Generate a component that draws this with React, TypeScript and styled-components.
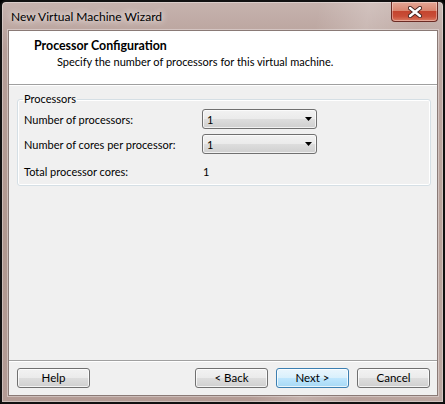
import React from "react";
import styled, { createGlobalStyle } from "styled-components";

const FONT = `"Segoe UI", Lato, "Noto Sans", sans-serif`;

const Global = createGlobalStyle`
  html, body { margin: 0; padding: 0; background: #000; }
  body { font-family: ${FONT}; font-size: 11px; color: #000; }
  * { box-sizing: border-box; }
`;

const Window = styled.div`
  width: 445px;
  height: 404px;
  border: 2px solid #111;
  border-radius: 6px 6px 2px 2px;
  background:
    linear-gradient(100deg, rgba(255,255,255,0) 0%, rgba(255,255,255,0) 62%, rgba(255,255,255,0.2) 72%, rgba(255,255,255,0.06) 82%, rgba(255,255,255,0.12) 100%),
    linear-gradient(180deg, #c6b3ae 0%, #b69e98 12%, #b1988f 60%, #b39b95 100%);
  box-shadow: inset 0 0 0 1px rgba(255,255,255,0.35);
  display: flex;
  flex-direction: column;
  overflow: hidden;
`;

const TitleBar = styled.div`
  height: 28px;
  display: flex;
  align-items: flex-start;
  justify-content: space-between;
  flex-shrink: 0;
`;

const Title = styled.div`
  align-self: center;
  padding-left: 9px;
  font-size: 12px;
  color: #000;
  text-shadow: 0 0 6px rgba(255,255,255,0.9), 0 0 10px rgba(255,255,255,0.6);
`;

const CloseButton = styled.div`
  width: 47px;
  height: 20px;
  margin-right: 5px;
  border: 1px solid #6b2b24;
  border-top: none;
  border-radius: 0 0 4px 4px;
  background: linear-gradient(180deg, #e4a796 0%, #d98670 45%, #c4452f 50%, #c94d37 75%, #db7b62 100%);
  box-shadow: inset 0 0 0 1px rgba(255,255,255,0.35);
  display: flex;
  align-items: center;
  justify-content: center;
`;

const Client = styled.div`
  flex: 1;
  margin: 0 5px 6px 6px;
  border: 1px solid #8a7a76;
  box-shadow: 0 0 0 1px rgba(255,255,255,0.35);
  background: #f0f0f0;
  display: flex;
  flex-direction: column;
`;

const Header = styled.div`
  height: 54px;
  flex-shrink: 0;
  background: #fff;
  border-bottom: 1px solid #a0a0a0;
  padding: 7px 0 0 25px;
`;

const HeaderTitle = styled.div`
  font-weight: bold;
  font-size: 12.4px;
  line-height: 16px;
`;

const HeaderSubtitle = styled.div`
  padding-left: 23px;
  line-height: 16px;
`;

const Body = styled.div`
  flex: 1;
  border-top: 1px solid #fff;
  padding: 6px 6px 0 8px;
`;

const Group = styled.fieldset`
  margin: 0;
  height: 94px;
  border: 1px solid #d5dfe5;
  border-radius: 3px;
  box-shadow: inset 0 0 0 1px #fff;
  padding: 3px 0 0 6px;
  display: grid;
  grid-template-columns: 178px 115px;
  grid-template-rows: 20px 20px 24px;
  row-gap: 5px;
  align-items: center;
  align-content: start;
`;

const Legend = styled.legend`
  padding: 0 1px;
  margin-left: -1px;
  line-height: 14px;
`;

const Label = styled.div``;

const Combo = styled.div`
  height: 20px;
  border: 1px solid #707070;
  border-radius: 3px;
  background: linear-gradient(180deg, #f2f2f2 0%, #ebebeb 48%, #dddddd 52%, #cfcfcf 100%);
  box-shadow: inset 0 0 0 1px rgba(255,255,255,0.7);
  display: flex;
  align-items: center;
  justify-content: space-between;
  padding: 0 4px 0 4px;
`;

const Value = styled.div<{ $indent?: number }>`
  padding-left: ${(p) => p.$indent ?? 0}px;
`;

const Footer = styled.div`
  height: 35px;
  flex-shrink: 0;
  border-top: 1px solid #a0a0a0;
  box-shadow: inset 0 1px 0 #fff;
  display: flex;
  align-items: center;
  padding: 0 7px 0 8px;
  gap: 8px;
`;

const Spacer = styled.div`
  flex: 1;
`;

const Button = styled.div<{ $default?: boolean }>`
  width: 73px;
  height: 20px;
  border: 1px solid ${(p) => (p.$default ? "#3c7fb1" : "#707070")};
  border-radius: 3px;
  background: ${(p) =>
    p.$default
      ? "linear-gradient(180deg, #eaf6fd 0%, #d9f0fc 48%, #bee6fd 52%, #a7d9f5 100%)"
      : "linear-gradient(180deg, #f2f2f2 0%, #ebebeb 48%, #dddddd 52%, #cfcfcf 100%)"};
  box-shadow: inset 0 0 0 1px rgba(255,255,255,0.75);
  display: flex;
  align-items: center;
  justify-content: center;
  font-size: 11.5px;
  line-height: 1;
`;

const Arrow = () => (
  <svg width="7" height="4" viewBox="0 0 7 4">
    <path d="M0 0 H7 L3.5 4 Z" fill="#000" />
  </svg>
);

const CloseX = () => (
  <svg width="14" height="12" viewBox="0 0 14 12">
    <path
      d="M2 2 L12 10 M12 2 L2 10"
      stroke="#4a2622"
      strokeWidth="4.2"
      strokeLinecap="round"
    />
    <path
      d="M2 2 L12 10 M12 2 L2 10"
      stroke="#fff"
      strokeWidth="2.4"
      strokeLinecap="round"
    />
  </svg>
);

export default function App() {
  return (
    <>
      <Global />
      <Window>
        <TitleBar>
          <Title>New Virtual Machine Wizard</Title>
          <CloseButton>
            <CloseX />
          </CloseButton>
        </TitleBar>
        <Client>
          <Header>
            <HeaderTitle>Processor Configuration</HeaderTitle>
            <HeaderSubtitle>
              Specify the number of processors for this virtual machine.
            </HeaderSubtitle>
          </Header>
          <Body>
            <Group>
              <Legend>Processors</Legend>
              <Label>Number of processors:</Label>
              <Combo>
                <Value>1</Value>
                <Arrow />
              </Combo>
              <Label>Number of cores per processor:</Label>
              <Combo>
                <Value>1</Value>
                <Arrow />
              </Combo>
              <Label>Total processor cores:</Label>
              <Value $indent={1}>1</Value>
            </Group>
          </Body>
          <Footer>
            <Button>Help</Button>
            <Spacer />
            <Button>&lt; Back</Button>
            <Button $default>Next &gt;</Button>
            <Button>Cancel</Button>
          </Footer>
        </Client>
      </Window>
    </>
  );
}
